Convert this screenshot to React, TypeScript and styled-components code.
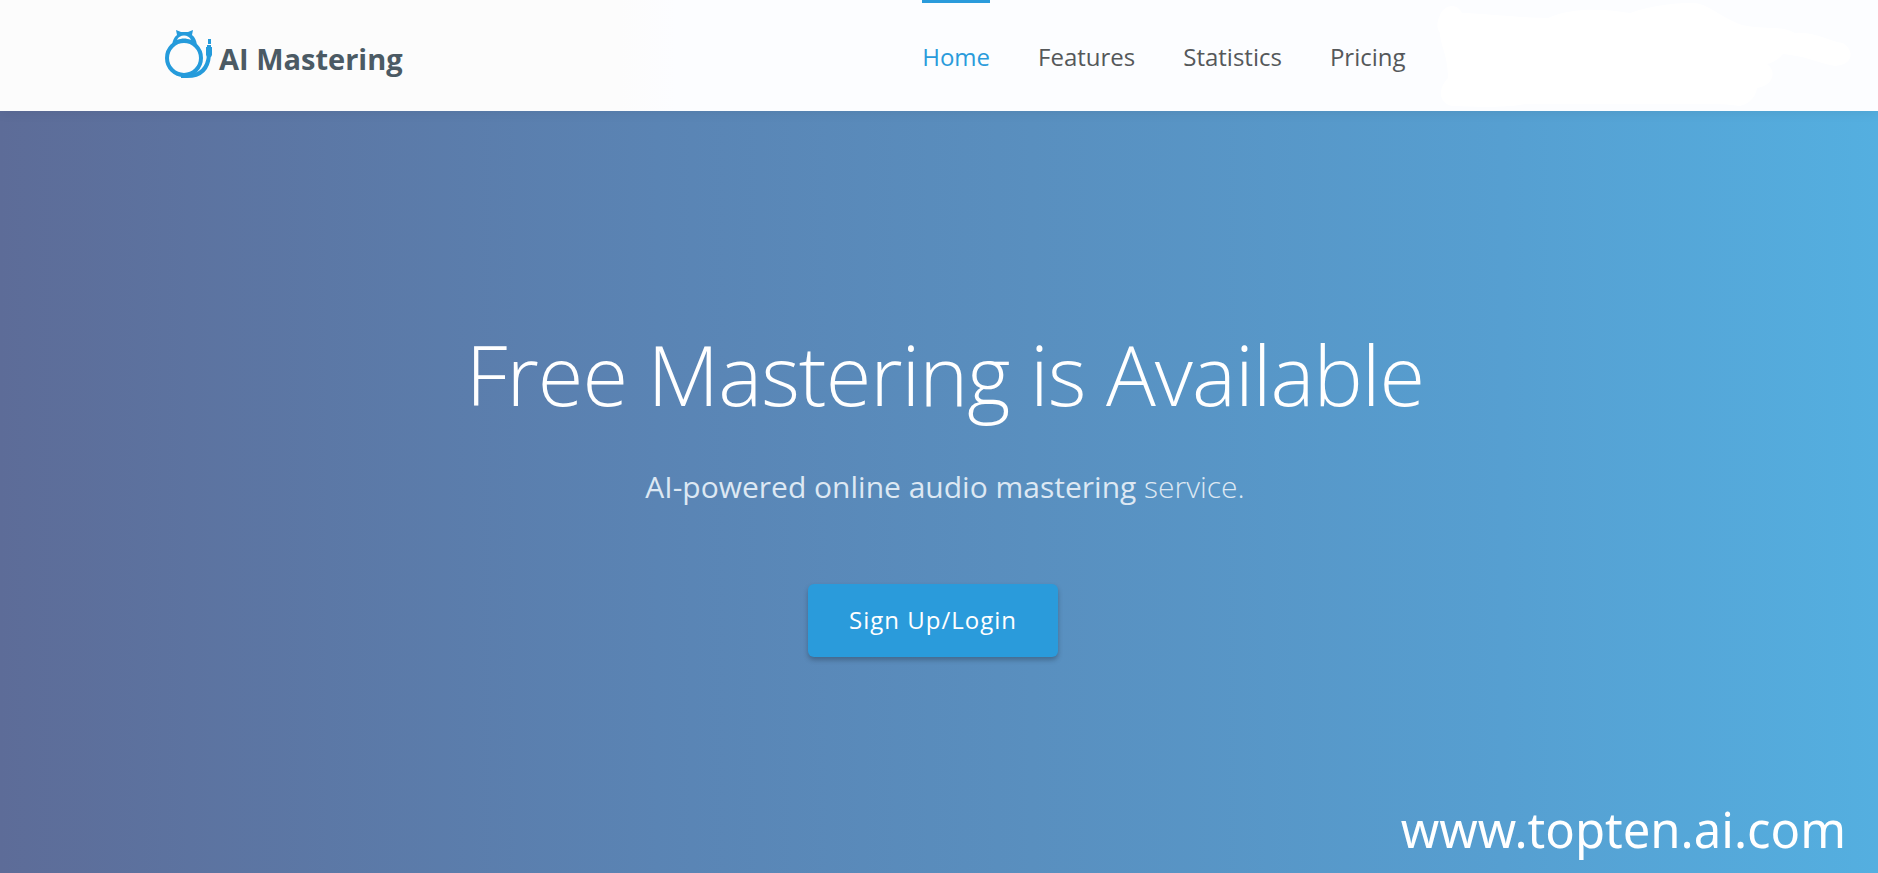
import React from "react";
import styled, { createGlobalStyle } from "styled-components";

const GlobalStyle = createGlobalStyle`
  *, *::before, *::after { box-sizing: border-box; }
  body {
    margin: 0;
    font-family: "Open Sans", "Noto Sans", sans-serif;
    font-weight: 300;
  }
`;

const Page = styled.div`
  display: flex;
  flex-direction: column;
  min-height: 100vh;
`;

const Header = styled.header`
  position: relative;
  z-index: 1;
  display: flex;
  justify-content: space-between;
  flex-wrap: wrap;
  padding: 0 calc(25% + 3px) 0 165px;
  background: linear-gradient(90deg, #fcfcfc 33%, #fcfdff 36%);
  box-shadow: 0 1px 12px rgba(0, 0, 0, 0.08);
`;

const Smudge = styled.svg`
  position: absolute;
  top: 0;
  right: 0;
`;

const Brand = styled.a`
  display: flex;
  align-items: flex-start;
  gap: 7px;
  padding-top: 30px;
  color: #4b5a64;
  font-size: 29px;
  font-weight: 700;
  line-height: 58px;
  text-decoration: none;
`;

const BrandText = styled.span`
  white-space: nowrap;
`;

const Nav = styled.nav`
  display: flex;
  gap: 48px;
`;

const NavLink = styled.a<{ $active?: boolean }>`
  padding: 37px 0;
  border-top: 3px solid ${(p) => (p.$active ? "#2a9bdb" : "transparent")};
  color: ${(p) => (p.$active ? "#2a9bdb" : "#55585a")};
  font-weight: 400;
  font-size: 24px;
  line-height: 34px;
  text-decoration: none;
`;

const Hero = styled.main`
  position: relative;
  flex: 1;
  display: flex;
  flex-direction: column;
  align-items: center;
  padding: 207px 0 120px 12px;
  background: linear-gradient(90deg, #5d6c98 0%, #5a84b4 35%, #598fbf 55%, #569fd1 80%, #54afe0 100%);
  color: #fff;
  text-align: center;
`;

const Title = styled.h1`
  margin: 0;
  font-size: 83px;
  font-weight: 300;
  line-height: 112px;
  letter-spacing: -1px;
`;

const Subtitle = styled.p`
  margin: 32px 0 72px;
  color: #dde8f3;
  font-size: 30px;
  line-height: 50px;
`;

const Strong = styled.strong`
  font-weight: 400;
`;

const SignUp = styled.button`
  margin-right: 24px;
  padding: 17px 41px 19px;
  border: 0;
  border-radius: 6px;
  background: #2a9bdb;
  box-shadow: 0 3px 5px rgba(0, 0, 0, 0.25);
  color: #fff;
  font: 400 24px/37px "Open Sans", "Noto Sans", sans-serif;
  letter-spacing: 1px;
  cursor: pointer;
`;

const SiteMark = styled.span`
  position: absolute;
  right: 32px;
  bottom: 10px;
  font-family: "Noto Sans", "Open Sans", sans-serif;
  font-size: 49px;
  font-weight: 400;
  line-height: 68px;
`;

const links = ["Home", "Features", "Statistics", "Pricing"];

function CatLogo() {
  return (
    <svg width="47" height="49" viewBox="0 0 47 49" fill="none" aria-hidden="true">
      <path d="M7 15 C8 10 9 7 12 5 L11 0 L16 2 H23 L28 0 L27 5 C30 7 31 10 32 15 L26 14 H12Z" fill="#259bdb" />
      <circle cx="19" cy="28" r="17" fill="#fcfcfc" stroke="#259bdb" strokeWidth="4" />
      <path d="M12 10 C14 4 24 4 26 10 C21 8 17 8 12 10Z" fill="#fcfcfc" />
      <path d="M16 46 H22 C36 46 43 38 44 25" stroke="#259bdb" strokeWidth="4" />
      <path d="M43 9h3v5h-3zM42 15h4v2h1v8l-1 2h-4l-1-2v-8h1z" fill="#259bdb" />
    </svg>
  );
}

export default function App() {
  return (
    <Page>
      <GlobalStyle />
      <Header>
        <Smudge width="458" height="110" viewBox="0 0 458 110" aria-hidden="true">
          <path
            fill="#fff"
            d="M20 15 C25 4 37 3 42 13 C70 14 105 18 128 18 C150 8 180 8 210 13 C235 4 258 3 275 3 C290 5 300 17 322 25 C345 30 360 25 375 33 C395 31 410 42 423 43 C436 52 432 65 415 66 C395 62 385 56 363 54 C358 60 352 63 347 64 C358 72 352 86 337 88 C336 99 325 106 318 106 C300 103 280 104 105 104 C85 108 55 107 32 106 C18 103 18 88 28 78 C28 55 20 45 20 33 C16 27 17 22 20 15Z"
          />
        </Smudge>
        <Brand href="#">
          <CatLogo />
          <BrandText>AI Mastering</BrandText>
        </Brand>
        <Nav>
          {links.map((label, i) => (
            <NavLink key={label} href="#" $active={i === 0}>
              {label}
            </NavLink>
          ))}
        </Nav>
      </Header>
      <Hero>
        <Title>Free Mastering is Available</Title>
        <Subtitle>
          <Strong>AI-powered online audio mastering</Strong> service.
        </Subtitle>
        <SignUp type="button">Sign Up/Login</SignUp>
        <SiteMark>www.topten.ai.com</SiteMark>
      </Hero>
    </Page>
  );
}
